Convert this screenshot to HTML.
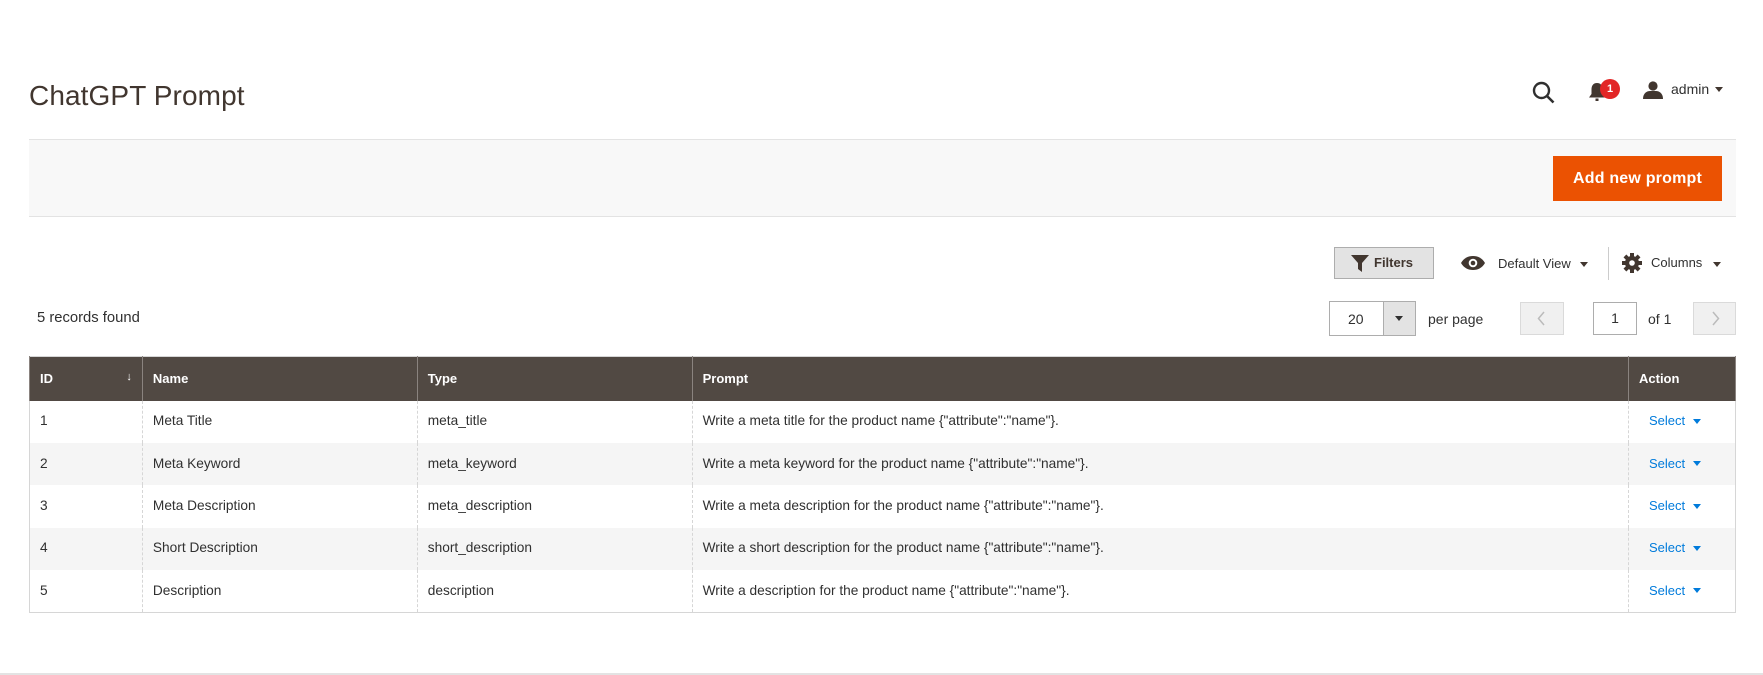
<!DOCTYPE html>
<html><head><meta charset="utf-8">
<style>
*{box-sizing:border-box;margin:0;padding:0}
body{width:1763px;height:675px;overflow:hidden;background:#fff;font-family:"Liberation Sans",sans-serif;color:#303030;position:relative}
.abs{position:absolute}
h1{position:absolute;left:29px;top:78px;font-size:28px;font-weight:400;color:#41362f;line-height:36px;letter-spacing:0.1px}
.bar{left:29px;top:139px;width:1707px;height:78px;background:#f8f8f8;border-top:1px solid #e3e3e3;border-bottom:1px solid #e3e3e3}
.btn{left:1553px;top:156px;width:169px;height:45px;background:#eb5202;color:#fff;font-weight:700;font-size:16px;line-height:45px;text-align:center;letter-spacing:0.2px}
.txt{font-size:13px;color:#303030;white-space:nowrap}
table{position:absolute;left:29px;top:356px;width:1707px;border-collapse:collapse;font-size:13.7px}
th{background:#514943;color:#fff;font-weight:700;font-size:13px;text-align:left;height:44px;padding:0 10px;border-left:1px solid #8a837f;border-right:1px solid #8a837f}
td{height:42.4px;padding:0 10px;border-left:1px dashed #d6d6d6;border-right:1px dashed #d6d6d6;padding-bottom:2px}
tbody tr:nth-child(even) td{background:#f5f5f5}
table{border:1px solid #d6d6d6}
.sel{color:#007bdb;font-size:13px}
.car{display:inline-block;width:0;height:0;border-left:4px solid transparent;border-right:4px solid transparent;border-top:5px solid #41362f;vertical-align:middle}
</style></head><body>
<h1>ChatGPT Prompt</h1>

<svg class="abs" style="left:1532px;top:81px" width="24" height="23" viewBox="0 0 24 23"><circle cx="9.5" cy="9.5" r="7.5" fill="none" stroke="#303030" stroke-width="2.4"/><line x1="15" y1="15" x2="21.5" y2="21.5" stroke="#303030" stroke-width="2.6"/></svg>
<svg class="abs" style="left:1588px;top:82px" width="18" height="20" viewBox="0 0 18 20"><path d="M9 1C5 1 3.5 4 3.5 7.5V12L1 15.5H17L14.5 12V7.5C14.5 4 13 1 9 1Z" fill="#41362f"/><rect x="7.5" y="16.5" width="3" height="2.5" fill="#41362f"/></svg>
<div class="abs" style="left:1600px;top:79px;width:20px;height:20px;border-radius:50%;background:#e22626;color:#fff;font-size:11px;font-weight:700;text-align:center;line-height:20px">1</div>
<svg class="abs" style="left:1643px;top:81px" width="20" height="18" viewBox="0 0 20 18"><circle cx="10" cy="5" r="4.6" fill="#41362f"/><path d="M0 18C0 12 4 10 7 10H13C16 10 20 12 20 18Z" fill="#41362f"/></svg>
<div class="abs txt" style="left:1671px;top:80px;font-size:14px;line-height:18px">admin</div>
<span class="abs car" style="left:1715px;top:87px"></span>

<div class="abs bar"></div>
<div class="abs btn">Add new prompt</div>

<div class="abs" style="left:1334px;top:247px;width:100px;height:32px;background:#e3e3e3;border:1px solid #adadad"></div>
<svg class="abs" style="left:1351px;top:255px" width="18" height="17" viewBox="0 0 18 17"><path d="M0 0H18L11 8V17L7 14V8Z" fill="#41362f"/></svg>
<div class="abs txt" style="left:1374px;top:255px;font-weight:700;line-height:16px;color:#41362f">Filters</div>
<svg class="abs" style="left:1461px;top:256px" width="24" height="14" viewBox="0 0 24 14"><path d="M0 7C3 2 7 0 12 0S21 2 24 7C21 12 17 14 12 14S3 12 0 7Z" fill="#41362f"/><circle cx="12" cy="7" r="4.3" fill="#fff"/><circle cx="12" cy="7" r="2.3" fill="#41362f"/></svg>
<div class="abs txt" style="left:1498px;top:256px;line-height:16px">Default View</div>
<span class="abs car" style="left:1580px;top:262px"></span>
<div class="abs" style="left:1608px;top:247px;width:1px;height:33px;background:#ccc"></div>
<svg class="abs" style="left:1622px;top:253px" width="20" height="20" viewBox="0 0 20 20"><g fill="#41362f"><circle cx="10" cy="10" r="7"/><rect x="8" y="0" width="4" height="20"/><rect x="0" y="8" width="20" height="4"/><rect x="8" y="0" width="4" height="20" transform="rotate(45 10 10)"/><rect x="8" y="0" width="4" height="20" transform="rotate(-45 10 10)"/></g><circle cx="10" cy="10" r="2.8" fill="#fff"/></svg>
<div class="abs txt" style="left:1651px;top:255px;line-height:16px">Columns</div>
<span class="abs car" style="left:1713px;top:262px"></span>

<div class="abs txt" style="left:37px;top:309px;font-size:14.8px;line-height:18px">5 records found</div>

<div class="abs" style="left:1329px;top:301px;width:87px;height:35px;border:1px solid #adadad;background:#fff"></div>
<div class="abs" style="left:1383px;top:302px;width:32px;height:33px;background:#e3e3e3;border-left:1px solid #adadad"></div>
<span class="abs car" style="left:1395px;top:316px;border-top-color:#303030"></span>
<div class="abs txt" style="left:1348px;top:310px;font-size:14px;line-height:18px">20</div>
<div class="abs txt" style="left:1428px;top:310px;font-size:14px;line-height:18px">per page</div>
<div class="abs" style="left:1520px;top:302px;width:44px;height:33px;background:#f0f0f0;border:1px solid #dadada"></div>
<svg class="abs" style="left:1537px;top:311px" width="9" height="15" viewBox="0 0 9 15"><path d="M7 1L1.5 7.5L7 14" fill="none" stroke="#bbb" stroke-width="1.5"/></svg>
<div class="abs" style="left:1593px;top:302px;width:44px;height:33px;border:1px solid #adadad;background:#fff;font-size:14px;line-height:31px;text-align:center">1</div>
<div class="abs txt" style="left:1648px;top:310px;font-size:14px;line-height:18px">of 1</div>
<div class="abs" style="left:1693px;top:302px;width:43px;height:33px;background:#f0f0f0;border:1px solid #dadada"></div>
<svg class="abs" style="left:1711px;top:311px" width="9" height="15" viewBox="0 0 9 15"><path d="M2 1L7.5 7.5L2 14" fill="none" stroke="#bbb" stroke-width="1.5"/></svg>

<table>
<colgroup><col style="width:113px"><col style="width:275px"><col style="width:275px"><col style="width:937px"><col style="width:107px"></colgroup>
<thead><tr><th>ID<span style="float:right;font-weight:400;font-size:11px">&#8595;</span></th><th>Name</th><th>Type</th><th>Prompt</th><th>Action</th></tr></thead>
<tbody>
<tr><td>1</td><td>Meta Title</td><td>meta_title</td><td>Write a meta title for the product name {"attribute":"name"}.</td><td style="padding-left:20px"><span class="sel">Select</span> <span class="car" style="border-top-color:#007bdb;margin-left:4px"></span></td></tr>
<tr><td>2</td><td>Meta Keyword</td><td>meta_keyword</td><td>Write a meta keyword for the product name {"attribute":"name"}.</td><td style="padding-left:20px"><span class="sel">Select</span> <span class="car" style="border-top-color:#007bdb;margin-left:4px"></span></td></tr>
<tr><td>3</td><td>Meta Description</td><td>meta_description</td><td>Write a meta description for the product name {"attribute":"name"}.</td><td style="padding-left:20px"><span class="sel">Select</span> <span class="car" style="border-top-color:#007bdb;margin-left:4px"></span></td></tr>
<tr><td>4</td><td>Short Description</td><td>short_description</td><td>Write a short description for the product name {"attribute":"name"}.</td><td style="padding-left:20px"><span class="sel">Select</span> <span class="car" style="border-top-color:#007bdb;margin-left:4px"></span></td></tr>
<tr><td>5</td><td>Description</td><td>description</td><td>Write a description for the product name {"attribute":"name"}.</td><td style="padding-left:20px"><span class="sel">Select</span> <span class="car" style="border-top-color:#007bdb;margin-left:4px"></span></td></tr>
</tbody></table>

<div class="abs" style="left:0;top:673px;width:1763px;height:2px;background:#e3e3e3"></div>
</body></html>
